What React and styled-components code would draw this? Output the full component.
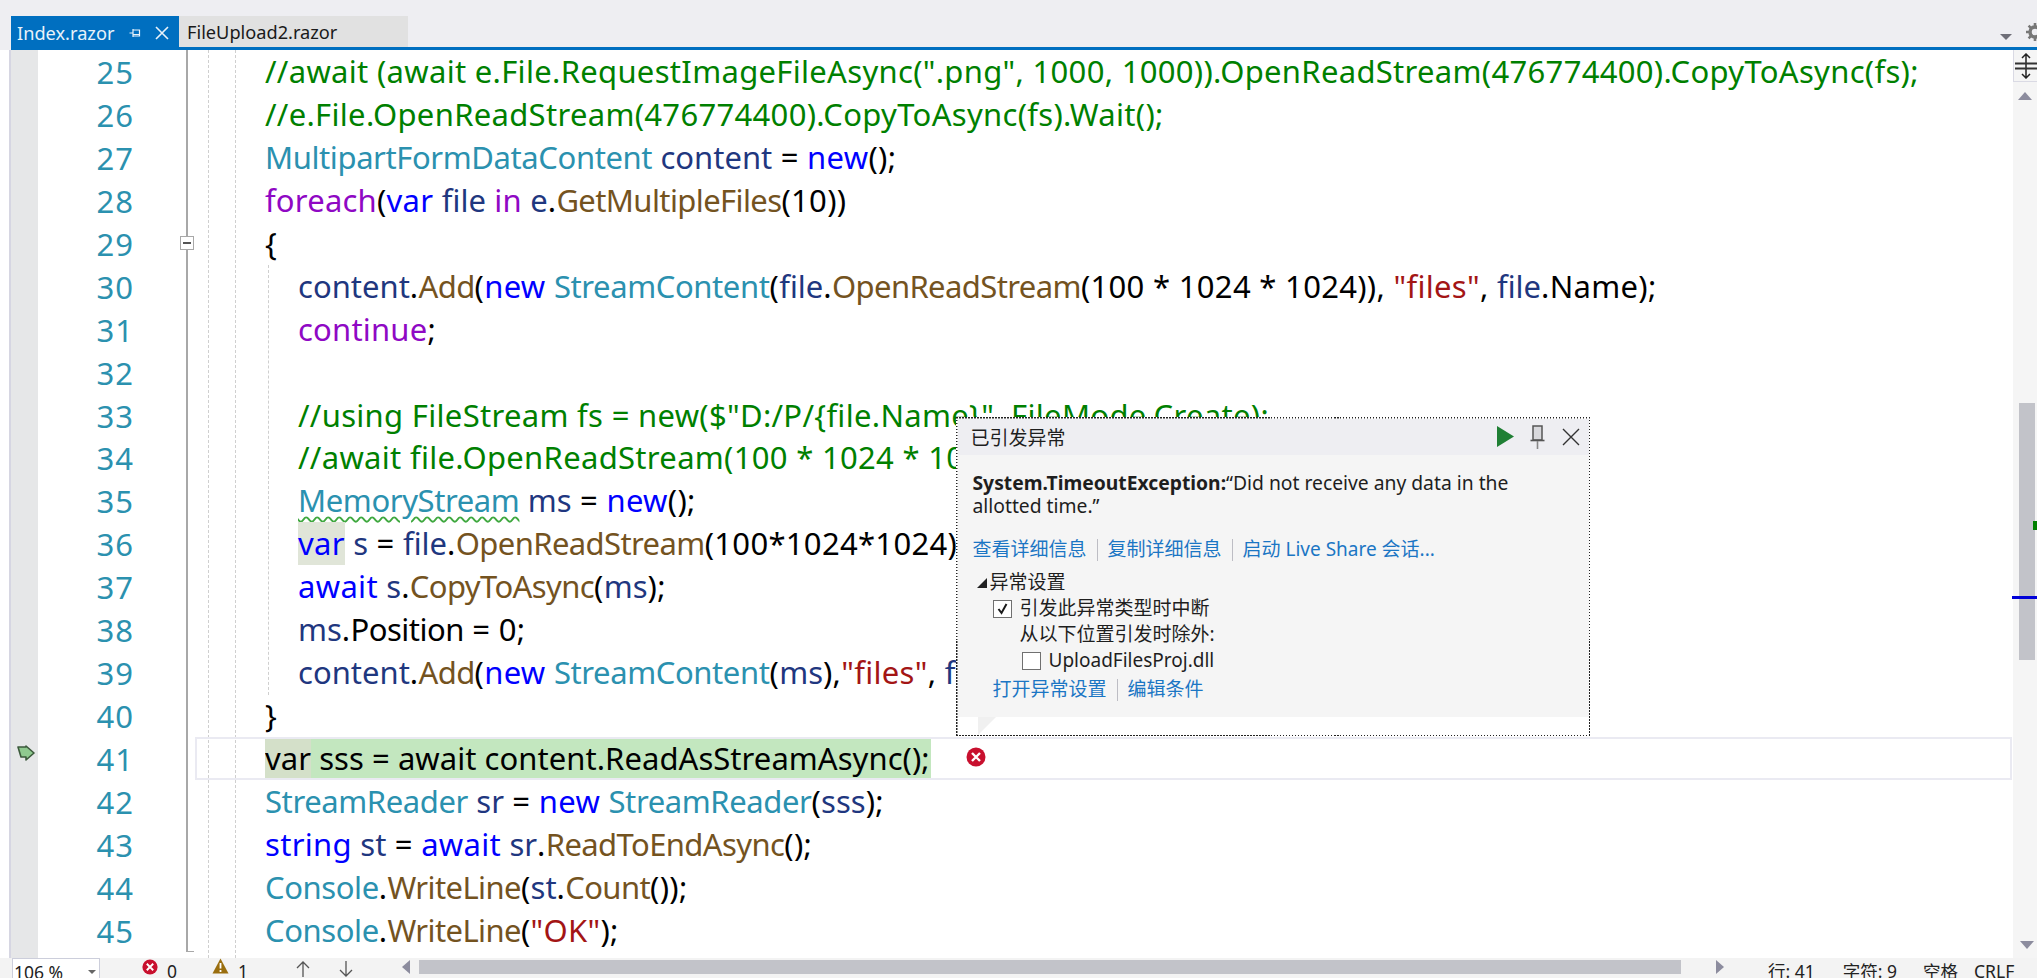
import React from 'react';
import styled, { createGlobalStyle } from 'styled-components';

const Global = createGlobalStyle`
  html, body { margin: 0; padding: 0; height: 100%; overflow: hidden; background: #fff; }
  #root { height: 100%; }
`;

const COLORS = {
  c: '#008000', t: '#2B91AF', k: '#0000FF', p: '#8F08C4', m: '#74531F',
  i: '#1F377F', s: '#A31515', x: '#000000',
};
const SPACING = { c: 0.31, t: -0.4, k: 0.31, p: 0.2, m: -0.6, i: 0, s: 0.31, x: -0.5 };

const Shell = styled.div`
  width: 2037px; height: 978px; display: flex; flex-direction: column; overflow: hidden;
  background: #eeeef2; position: relative;
  font-family: "Noto Sans", "Noto Sans CJK SC", sans-serif;
`;
const TabStrip = styled.div`
  height: 47px; flex: none; display: flex; align-items: flex-end; padding-left: 11px; box-sizing: border-box;
  position: relative;
`;
const Tab = styled.div`
  height: ${p => (p.$active ? 34 : 31)}px; align-self: flex-start; margin-top: 16px; box-sizing: border-box;
  width: ${p => p.$w}px; display: flex; align-items: center; padding-left: ${p => p.$pad}px;
  background: ${p => (p.$active ? '#006FC0' : '#E1E1E1')};
  color: ${p => (p.$active ? '#E8F2FA' : '#1a1a1a')};
  font-size: 18.2px; gap: 0;
  position: relative; z-index: 1;
`;
const TabIcon = styled.svg`
  flex: none; margin-left: ${p => p.$ml}px; display: block;
`;
const StripIcons = styled.div`
  margin-left: auto; align-self: flex-start; margin-top: 22px; display: flex; align-items: center; gap: 13px;
  margin-right: -8px;
`;
const Accent = styled.div` height: 3px; flex: none; margin-left: 11px; background: #006FC0; `;
const Body = styled.div` flex: 1; min-height: 0; display: flex; background: #fff; position: relative; `;
const LeftEdge = styled.div` width: 2px; margin-left: 9px; flex: none; background: #D6D6E2; `;
const Glyphs = styled.div`
  width: 27px; flex: none; background: #E6E7E8; position: relative;
`;
const ExecArrow = styled.svg` position: absolute; left: 5px; top: 695px; `;
const Numbers = styled.div`
  width: 96px; flex: none; text-align: right; font-size: 31px; letter-spacing: 1px; color: #2B91AF;
  overflow: hidden;
`;
const Num = styled.div` height: 42.95px; line-height: 42.95px; position: relative; top: 1px; `;
const Outline = styled.div` width: 131px; flex: none; position: relative; overflow: visible; `;
const OutlineBar = styled.div`
  position: absolute; left: 52px; top: 0; bottom: 6px; width: 2px; background: #A8A8A8;
  &::after { content: ''; position: absolute; left: 0; bottom: 0; width: 8px; height: 1px; background: #A8A8A8; }
`;
const Fold = styled.div`
  position: absolute; left: 46px; top: 186px; width: 14px; height: 14px; box-sizing: border-box;
  border: 1px solid #A8A8A8; background: #fff;
  &::after { content: ''; position: absolute; left: 2px; right: 2px; top: 5px; height: 2px; background: #555; }
`;
const Guide = styled.div`
  position: absolute; left: ${p => p.$x}px; top: ${p => p.$top}px; height: ${p => p.$h}px; width: 0;
  border-left: 1px dashed #CFCFCF;
`;
const Code = styled.div` flex: 1; min-width: 0; overflow: hidden; `;
const Row = styled.div`
  height: 42.95px; line-height: 42.95px; white-space: pre; font-size: 31px; color: #000;
  padding-left: ${p => p.$indent ? 33 : 0}px; letter-spacing: 0.31px;
`;
const Tok = styled.span`
  color: ${p => COLORS[p.$k]};
  letter-spacing: ${p => SPACING[p.$k]}px;
`;
const Wavy = styled.span`
  color: #2B91AF; letter-spacing: -0.4px; text-decoration: underline wavy #3FA83F 1.5px; text-underline-offset: 4px;
`;
const Hilite = styled.span`
  background: #C3E7BF; display: inline-block; height: 42.95px; padding-right: 1px; letter-spacing: 0.05px;
`;
const HiliteVar = styled.span` background: #D4E0C9; display: inline-block; height: 42.95px; `;
const VarMark = styled.span` background: #E0E5D8; color: #0000FF; display: inline-block; height: 42.95px; vertical-align: top; `;
const CurrentLine = styled.div`
  position: absolute; left: 195px; right: 25px; top: 687px; height: 43px; box-sizing: border-box;
  border: 2px solid #EAEAF2; pointer-events: none;
`;
const ErrorMark = styled.svg` position: absolute; left: 966px; top: 697px; `;

const ScrollV = styled.div`
  width: 24px; flex: none; background: #F5F5F5; position: relative;
`;
const Splitter = styled.div`
  height: 32px; box-sizing: border-box; border-left: 1px solid #DADAE4; border-bottom: 1px solid #DADAE4;
  background: #F5F5F5; display: flex; align-items: center; justify-content: center;
`;
const UpTri = styled.div`
  margin: 10px auto 0; width: 0; height: 0; border-left: 7px solid transparent; border-right: 7px solid transparent;
  border-bottom: 8px solid #8C8C9E;
`;
const DownTri = styled.div`
  position: absolute; left: 7px; bottom: 9px; width: 0; height: 0;
  border-left: 7px solid transparent; border-right: 7px solid transparent; border-top: 8px solid #8C8C9E;
`;
const Thumb = styled.div`
  position: absolute; left: 6px; width: 16px; top: 353px; height: 257px; background: #C2C3C9;
`;
const Mark = styled.div`
  position: absolute; left: ${p => p.$l}px; right: 0; top: ${p => p.$t}px; height: ${p => p.$h}px; background: ${p => p.$c};
`;

const Bottom = styled.div`
  height: 20px; flex: none; background: #F3F3F3; display: flex; align-items: flex-start; overflow: hidden;
  font-size: 17.5px; color: #222; position: relative; padding-left: 12px; box-sizing: border-box;
`;
const Combo = styled.div`
  width: 88px; height: 34px; flex: none; box-sizing: border-box; background: #fff; border: 1px solid #CCCEDB;
  display: flex; padding-left: 1px; line-height: 26px; position: relative;
  &::after { content: ''; position: absolute; right: 3px; top: 11px; border-left: 4px solid transparent;
    border-right: 4px solid transparent; border-top: 4px solid #666; }
`;
const BarItem = styled.div`
  width: ${p => p.$w}px; margin-left: ${p => p.$ml || 0}px; flex: none; display: flex; align-items: flex-start; gap: 9px;
  line-height: 26px;
`;
const BarIcon = styled.svg` flex: none; margin-top: ${p => p.$mt ?? 1}px; margin-left: ${p => p.$ml || 0}px; display: block; `;
const LeftTri = styled.div`
  margin-left: ${p => p.$ml}px; margin-top: 2px; flex: none; width: 0; height: 0; border-top: 7px solid transparent;
  border-bottom: 7px solid transparent; border-right: 8px solid #8C8C9E;
`;
const RightTri = styled.div`
  margin-left: ${p => p.$ml}px; margin-top: 2px; flex: none; width: 0; height: 0; border-top: 7px solid transparent;
  border-bottom: 7px solid transparent; border-left: 8px solid #8C8C9E;
`;
const HThumb = styled.div`
  margin-left: 9px; margin-top: 2px; width: 1262px; height: 14px; flex: none; background: #C2C3C9;
`;
const StatusText = styled.div` flex: none; margin-left: ${p => p.$ml}px; line-height: 26px; white-space: pre; `;

const dots = `
  repeating-linear-gradient(90deg, #222 0 1.5px, transparent 1.5px 3px) top left / 100% 1.5px no-repeat,
  repeating-linear-gradient(90deg, #222 0 1.5px, transparent 1.5px 3px) bottom left / 100% 1.5px no-repeat,
  repeating-linear-gradient(0deg, #222 0 1.5px, transparent 1.5px 3px) top left / 1.5px 100% no-repeat,
  repeating-linear-gradient(0deg, #222 0 1.5px, transparent 1.5px 3px) top right / 1.5px 100% no-repeat,
  #fff
`;
const Popup = styled.div`
  position: absolute; left: 956px; top: 367px; width: 634px; height: 319px; box-sizing: border-box;
  padding: 1.5px; background: ${dots}; display: flex; flex-direction: column; z-index: 3;
  font-size: 19.3px; color: #1E1E1E;
`;
const PopHead = styled.div`
  height: 36px; flex: none; background: #EEEEF2; display: flex; align-items: center; padding: 0 8px 0 13px;
  font-size: 19px;
`;
const PopHeadIcons = styled.div` margin-left: auto; display: flex; align-items: center; gap: 16px; `;
const PopBody = styled.div`
  height: 262px; flex: none; background: #F5F5F5; padding: 16px 15px 0 15px; box-sizing: border-box; line-height: 23.5px;
`;
const Msg = styled.div` width: 570px; `;
const LinkRow = styled.div`
  display: flex; align-items: center; margin-top: ${p => p.$mt}px; margin-left: ${p => p.$ml || 0}px; height: 27px;
  color: #1B76C4; font-size: 19px; white-space: pre;
`;
const Sep = styled.span` width: 1px; height: 22px; background: #BDBDC4; margin: 0 10px; flex: none; `;
const SetHead = styled.div`
  display: flex; align-items: center; margin-top: 7px; height: 25px; margin-left: 4px; font-size: 19px;
  &::before { content: ''; width: 0; height: 0; border-style: solid; border-width: 0 0 10px 10px;
    border-color: transparent transparent #222 transparent; margin-right: 3px; }
`;
const CheckRow = styled.div`
  display: flex; align-items: center; height: 26px; margin-left: ${p => p.$ml}px; gap: 8px; font-size: 19px; white-space: pre;
`;
const Box = styled.div`
  width: 19px; height: 18px; box-sizing: border-box; border: 1px solid #707070; background: #fff; flex: none;
  display: flex; align-items: center; justify-content: center;
`;
const Tail = styled.div`
  position: relative; flex: 1;
  &::after { content: ''; position: absolute; left: 20px; top: 0; width: 0; height: 0; border-style: solid;
    border-width: 18px 18px 0 0; border-color: #F0F0F0 transparent transparent transparent; }
`;

const T = ({ k, children }) => <Tok $k={k}>{children}</Tok>;

const rows = [
  [0, <T k="c">//await (await e.File.RequestImageFileAsync(".png", 1000, 1000)).OpenReadStream(476774400).CopyToAsync(fs);</T>],
  [0, <T k="c">//e.File.OpenReadStream(476774400).CopyToAsync(fs).Wait();</T>],
  [0, <><T k="t">MultipartFormDataContent</T> <T k="i">content</T> = <T k="k">new</T>();</>],
  [0, <><T k="p">foreach</T>(<T k="k">var</T> <T k="i">file</T> <T k="p">in</T> <T k="i">e</T>.<T k="m">GetMultipleFiles</T>(10))</>],
  [0, <>{'{'}</>],
  [1, <><T k="i">content</T>.<T k="m">Add</T>(<T k="k">new</T> <T k="t">StreamContent</T>(<T k="i">file</T>.<T k="m">OpenReadStream</T>(100 * 1024 * 1024)), <T k="s">"files"</T>, <T k="i">file</T>.Name);</>],
  [1, <><T k="p">continue</T>;</>],
  [1, <></>],
  [1, <T k="c">//using FileStream fs = new($"D:/P/{'{'}file.Name{'}'}", FileMode.Create);</T>],
  [1, <T k="c">//await file.OpenReadStream(100 * 1024 * 1024).CopyToAsync(fs);</T>],
  [1, <><Wavy>MemoryStream</Wavy> <T k="i">ms</T> = <T k="k">new</T>();</>],
  [1, <><VarMark>var</VarMark> <T k="i">s</T> = <T k="i">file</T>.<T k="m">OpenReadStream</T>(100*1024*1024);</>],
  [1, <><T k="k">await</T> <T k="i">s</T>.<T k="m">CopyToAsync</T>(<T k="i">ms</T>);</>],
  [1, <><T k="i">ms</T>.<T k="x">Position</T> = 0;</>],
  [1, <><T k="i">content</T>.<T k="m">Add</T>(<T k="k">new</T> <T k="t">StreamContent</T>(<T k="i">ms</T>),<T k="s">"files"</T>, <T k="i">file</T>.Name);</>],
  [0, <>{'}'}</>],
  [0, <Hilite><HiliteVar>var</HiliteVar> sss = await content.ReadAsStreamAsync();</Hilite>],
  [0, <><T k="t">StreamReader</T> <T k="i">sr</T> = <T k="k">new</T> <T k="t">StreamReader</T>(<T k="i">sss</T>);</>],
  [0, <><T k="k">string</T> <T k="i">st</T> = <T k="k">await</T> <T k="i">sr</T>.<T k="m">ReadToEndAsync</T>();</>],
  [0, <><T k="t">Console</T>.<T k="m">WriteLine</T>(<T k="i">st</T>.<T k="m">Count</T>());</>],
  [0, <><T k="t">Console</T>.<T k="m">WriteLine</T>(<T k="s">"OK"</T>);</>],
];

const ErrIcon = () => (
  <>
    <circle cx="10" cy="10" r="9.5" fill="#C8102E" />
    <path d="M6 6 L14 14 M14 6 L6 14" stroke="#fff" strokeWidth="2.4" />
  </>
);

export default function App() {
  return (
    <Shell>
      <Global />
      <TabStrip>
        <Tab $active $w={168} $pad={6}>
          Index.razor
          <TabIcon $ml={15} width="12" height="12" viewBox="0 0 12 12">
            <path d="M0.5 6 H4 M4 2 V10 M4 3 H10.5 V9 H4 M4 7.5 H10.5" stroke="#E8F2FA" strokeWidth="1.2" fill="none" />
          </TabIcon>
          <TabIcon $ml={14} width="14" height="14" viewBox="0 0 14 14">
            <path d="M1 1 L13 13 M13 1 L1 13" stroke="#E8F2FA" strokeWidth="1.6" fill="none" />
          </TabIcon>
        </Tab>
        <Tab $w={229} $pad={8}>FileUpload2.razor</Tab>
        <StripIcons>
          <svg width="12" height="6" viewBox="0 0 12 6" style={{ display: 'block', marginTop: 10 }}>
            <path d="M0 0 H12 L6 6 Z" fill="#6E6E78" />
          </svg>
          <svg width="20" height="20" viewBox="0 0 20 20" style={{ display: 'block' }}>
            <circle cx="10" cy="10" r="5" stroke="#777" strokeWidth="3.4" fill="none" />
            <path d="M10 1 V4 M10 16 V19 M1 10 H4 M16 10 H19 M3.6 3.6 L5.8 5.8 M14.2 14.2 L16.4 16.4 M16.4 3.6 L14.2 5.8 M5.8 14.2 L3.6 16.4" stroke="#777" strokeWidth="2.6" />
          </svg>
        </StripIcons>
      </TabStrip>
      <Accent />
      <Body>
        <LeftEdge />
        <Glyphs>
          <ExecArrow width="20" height="16" viewBox="0 0 20 16">
            <path d="M2 2 H10 V1 L18 8 L10 15 V12 H5 Z" fill="#8FC98F" stroke="#3C5A3C" strokeWidth="1.6" strokeLinejoin="round" />
          </ExecArrow>
        </Glyphs>
        <Numbers>
          {rows.map((_, i) => <Num key={i}>{25 + i}</Num>)}
        </Numbers>
        <Outline>
          <OutlineBar />
          <Fold />
          <Guide $x={74} $top={0} $h={908} />
          <Guide $x={101} $top={0} $h={908} />
          <Guide $x={134} $top={215} $h={430} />
        </Outline>
        <Code>
          {rows.map(([indent, node], i) => (
            <Row key={i} $indent={indent}>{node}</Row>
          ))}
        </Code>
        <CurrentLine />
        <ErrorMark width="20" height="20" viewBox="0 0 20 20"><ErrIcon /></ErrorMark>
        <ScrollV>
          <Splitter>
            <svg width="22" height="26" viewBox="0 0 22 26" style={{ display: 'block' }}>
              <path d="M11 1 V25 M7 5 L11 1 L15 5 M7 21 L11 25 L15 21" stroke="#222" strokeWidth="1.5" fill="none" />
              <path d="M0 10.5 H22 M0 15.5 H22" stroke="#333" strokeWidth="2" />
            </svg>
          </Splitter>
          <UpTri />
          <Thumb />
          <Mark $l={20} $t={471} $h={9} $c="#008000" />
          <Mark $l={-1} $t={546} $h={3} $c="#0000D8" />
          <DownTri />
        </ScrollV>
        <Popup>
          <PopHead>
            已引发异常
            <PopHeadIcons>
              <svg width="17" height="21" viewBox="0 0 17 21" style={{ display: 'block' }}><path d="M0 0 L17 10.5 L0 21 Z" fill="#1F7F34" /></svg>
              <svg width="15" height="24" viewBox="0 0 15 24" style={{ display: 'block' }}>
                <path d="M3 1 H12 V15 H3 Z" fill="#D8D8DC" stroke="#555" strokeWidth="1.5" />
                <path d="M0.5 15.5 H14.5" stroke="#555" strokeWidth="1.6" />
                <path d="M7.5 16 V24" stroke="#888" strokeWidth="1.6" />
              </svg>
              <svg width="20" height="20" viewBox="0 0 20 20" style={{ display: 'block' }}>
                <path d="M2 2 L18 18 M18 2 L2 18" stroke="#333" strokeWidth="1.4" fill="none" />
              </svg>
            </PopHeadIcons>
          </PopHead>
          <PopBody>
            <Msg><b>System.TimeoutException:</b>“Did not receive any data in the allotted time.”</Msg>
            <LinkRow $mt={19}>查看详细信息<Sep />复制详细信息<Sep />启动 Live Share 会话...</LinkRow>
            <SetHead>异常设置</SetHead>
            <CheckRow $ml={20}>
              <Box>
                <svg width="13" height="13" viewBox="0 0 13 13" style={{ display: 'block' }}>
                  <path d="M2.5 7 L5.5 11 L10.5 2" stroke="#1A1A1A" strokeWidth="2" fill="none" />
                </svg>
              </Box>
              引发此异常类型时中断
            </CheckRow>
            <CheckRow $ml={47}>从以下位置引发时除外:</CheckRow>
            <CheckRow $ml={49}><Box />UploadFilesProj.dll</CheckRow>
            <LinkRow $mt={3} $ml={20}>打开异常设置<Sep />编辑条件</LinkRow>
          </PopBody>
          <Tail />
        </Popup>
      </Body>
      <Bottom>
        <Combo>106 %</Combo>
        <BarItem $w={30} $ml={42}>
          <BarIcon width="16" height="16" viewBox="0 0 20 20"><ErrIcon /></BarIcon>
          <span>0</span>
        </BarItem>
        <BarItem $w={30} $ml={40}>
          <BarIcon $mt={0} width="17" height="16" viewBox="0 0 17 16">
            <path d="M8.5 0.5 L16.5 15.5 H0.5 Z" fill="#9A6E0E" />
            <path d="M8.5 5 V10.5 M8.5 12 V14" stroke="#fff" strokeWidth="1.8" />
          </BarIcon>
          <span>1</span>
        </BarItem>
        <BarIcon $mt={3} $ml={54} width="14" height="16" viewBox="0 0 14 16">
          <path d="M7 16 V1 M1 7 L7 1 L13 7" stroke="#555" strokeWidth="1.3" fill="none" />
        </BarIcon>
        <BarIcon $mt={3} $ml={29} width="14" height="16" viewBox="0 0 14 16">
          <path d="M7 0 V15 M1 9 L7 15 L13 9" stroke="#555" strokeWidth="1.3" fill="none" />
        </BarIcon>
        <LeftTri $ml={49} />
        <HThumb />
        <RightTri $ml={35} />
        <StatusText $ml={44}>行: 41</StatusText>
        <StatusText $ml={28}>字符: 9</StatusText>
        <StatusText $ml={26}>空格</StatusText>
        <StatusText $ml={16}>CRLF</StatusText>
      </Bottom>
    </Shell>
  );
}
